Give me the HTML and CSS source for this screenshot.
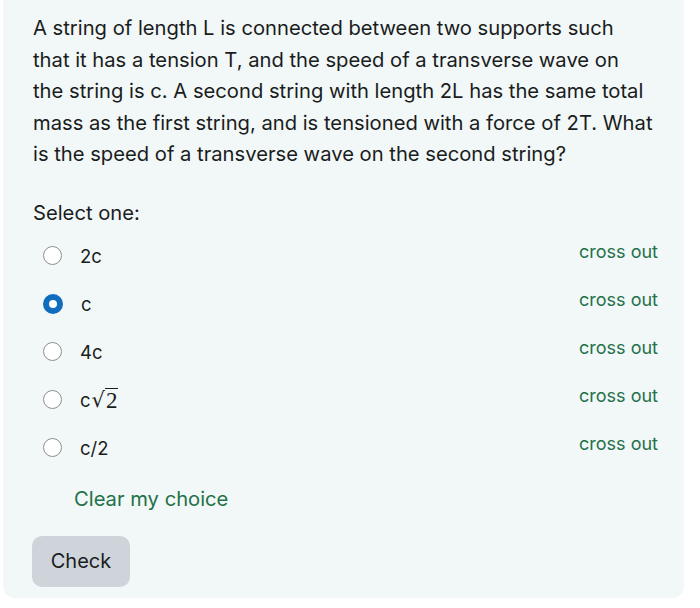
FILE: index.html
```html
<!DOCTYPE html>
<html lang="en">

<head>
  <meta charset="UTF-8">
  <meta name="viewport" content="width=device-width, initial-scale=1.0">
  <title>Question</title>
  <link rel="stylesheet" href="styles.css">
</head>

<body>
  <div class="card">
    <p class="question">A string of length L is connected between two supports such<br>
      that it has a tension T, and the speed of a transverse wave on<br>
      the string is c. A second string with length 2L has the same total<br>
      mass as the first string, and is tensioned with a force of 2T. What<br>
      is the speed of a transverse wave on the second string?</p>

    <div class="prompt">Select one:</div>

    <div class="answers">
      <div class="option">
        <span class="radio"></span>
        <span class="label">2c</span>
        <a href="#" class="cross">cross out</a>
      </div>
      <div class="option">
        <span class="radio checked"></span>
        <span class="label">c</span>
        <a href="#" class="cross">cross out</a>
      </div>
      <div class="option">
        <span class="radio"></span>
        <span class="label">4c</span>
        <a href="#" class="cross">cross out</a>
      </div>
      <div class="option">
        <span class="radio"></span>
        <span class="label">c<span class="sqrt"><span class="root">&radic;</span><span class="radicand">2</span></span></span>
        <a href="#" class="cross">cross out</a>
      </div>
      <div class="option">
        <span class="radio"></span>
        <span class="label">c/2</span>
        <a href="#" class="cross">cross out</a>
      </div>
    </div>

    <a href="#" class="clear">Clear my choice</a>

    <button class="check">Check</button>
  </div>
</body>

</html>
```

FILE: styles.css
```css
body {
  margin: 0;
  background-color: #ffffff;
  font-family: Inter, "Liberation Sans", Arial, sans-serif;
  color: #1a1d20;
}

.card {
  margin-left: 3px;
  width: 681px;
  height: 598px;
  box-sizing: border-box;
  background-color: #f2f7f8;
  border-radius: 0 0 12px 12px;
  padding: 12px 0 0 30px;
}

.question {
  margin: 0;
  width: 640px;
  font-size: 20.2px;
  line-height: 31.5px;
  white-space: nowrap;
}

.prompt {
  margin-top: 29px;
  font-size: 20.2px;
  line-height: 28px;
}

.answers {
  margin-top: 5px;
}

.option {
  display: flex;
  align-items: center;
  height: 48px;
  padding-left: 10px;
  padding-right: 26px;
}

.radio {
  width: 17px;
  height: 17px;
  border: 1.5px solid #8c9093;
  border-radius: 50%;
  background-color: #ffffff;
  flex: 0 0 auto;
}

.radio.checked {
  width: 8px;
  height: 8px;
  border: 6px solid #0f6cbf;
}

.label {
  margin-left: 18px;
  font-size: 18.5px;
  flex: 1;
}

.sqrt {
  display: inline-flex;
  align-items: flex-end;
  margin-left: 1px;
}

.root {
  font-family: "DejaVu Serif", serif;
  font-size: 21px;
}

.radicand {
  font-family: "Liberation Serif", serif;
  font-size: 23px;
  border-top: 1.5px solid #1a1d20;
  line-height: 23px;
  padding: 0 1px;
}

.cross {
  margin-bottom: 8px;
  color: #237148;
  text-decoration: none;
  font-size: 18px;
}

.clear {
  display: inline-block;
  margin-top: 13px;
  margin-left: 41px;
  color: #237148;
  text-decoration: none;
  font-size: 20.2px;
  line-height: 28px;
}

.check {
  display: block;
  margin-top: 23px;
  margin-left: -1px;
  width: 98px;
  height: 51px;
  border: none;
  border-radius: 10px;
  background-color: #ced4da;
  color: #1a1d20;
  font-family: Inter, "Liberation Sans", Arial, sans-serif;
  font-size: 20px;
}
```
